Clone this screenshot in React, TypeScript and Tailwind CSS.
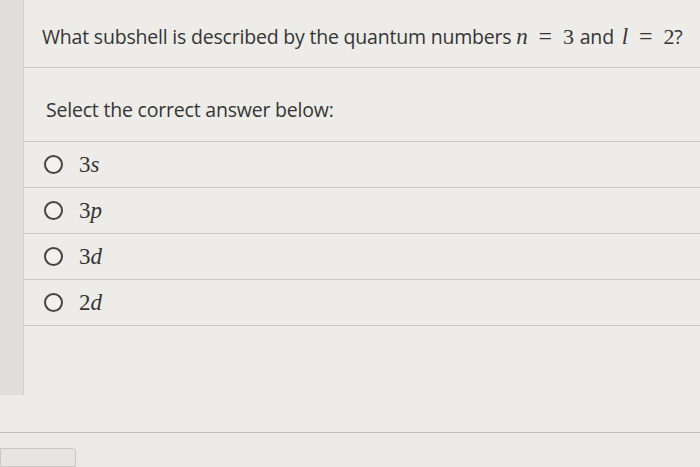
const options = [
  { num: "3", letter: "s" },
  { num: "3", letter: "p" },
  { num: "3", letter: "d" },
  { num: "2", letter: "d" },
];

const serif = "font-['Liberation_Serif','Times_New_Roman',serif]";

export default function App() {
  return (
    <div className="w-[700px] h-[467px] overflow-hidden bg-[#ebeae7] text-[#353535] font-['Open_Sans',sans-serif] flex flex-col">
      <div className="flex h-[395px]">
        <div className="w-[24px] bg-[#e0dfdc] border-r border-[#d2d1ce]" />
        <div className="flex-1 flex flex-col bg-[#edece9]">
          <div className="h-[68px] border-b border-[#c9c8c4] flex items-center pl-[18px] pt-[6px] text-[19.5px] tracking-[-0.2px]">
            <span>
              What subshell is described by the quantum numbers{" "}
              <span className={`${serif} italic text-[23px]`}>n</span>
              <span className={`${serif} text-[24px] px-[11px]`}>=</span>
              <span className={`${serif} text-[22px]`}>3</span>
              <span className="ml-[6px]">and</span>
              <span className={`${serif} italic text-[23px] ml-[8px]`}>l</span>
              <span className={`${serif} text-[24px] px-[11px]`}>=</span>
              <span className={`${serif} text-[22px]`}>2</span>?
            </span>
          </div>
          <div className="h-[74px] border-b border-[#c9c8c4] flex items-center pl-[22px] pt-[10px] text-[19.5px] tracking-[-0.2px]">
            Select the correct answer below:
          </div>
          {options.map((o, i) => (
            <div
              key={i}
              className="h-[46px] border-b border-[#c9c8c4] flex items-center pl-[20px] gap-[16px]"
            >
              <span className="w-[19px] h-[19px] rounded-full border-[2.5px] border-[#444] bg-[#f2f1ee]" />
              <span className={`${serif} text-[23px] leading-none`}>
                {o.num}
                <span className="italic">{o.letter}</span>
              </span>
            </div>
          ))}
        </div>
      </div>
      <div className="h-[38px] border-b border-[#c2c1bd] bg-[#ecebe8]" />
      <div className="flex-1 pt-[15px]">
        <div className="w-[76px] h-full border border-[#c9c8c5] rounded-tr-[3px] bg-[#e6e5e2]" />
      </div>
    </div>
  );
}
